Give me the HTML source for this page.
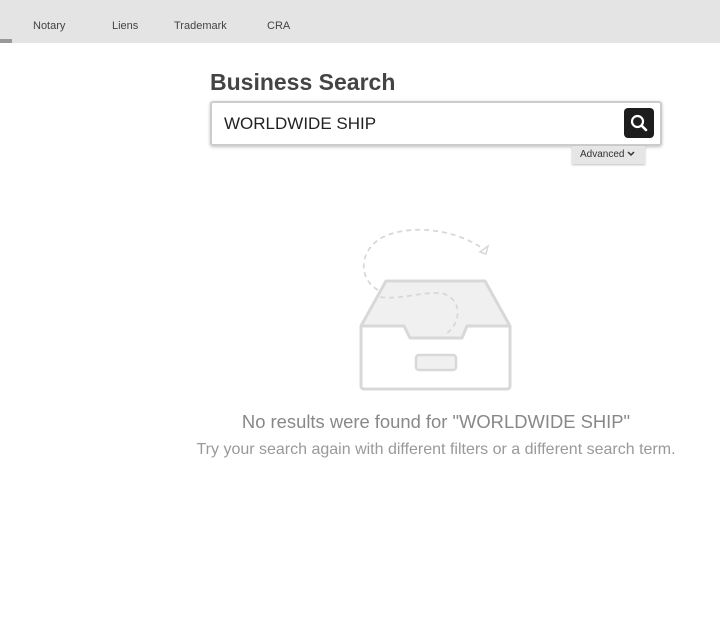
<!DOCTYPE html>
<html><head><style>
body{margin:0;width:720px;height:640px;background:#fff;font-family:"Liberation Sans",sans-serif;position:relative;overflow:hidden}
.hdr{position:absolute;left:0;top:0;width:720px;height:43px;background:#e4e4e4}
.tab{position:absolute;top:20px;font-size:11px;color:#444}
.ind{position:absolute;left:0;top:39px;width:12px;height:4px;background:#999}
h1{position:absolute;left:210px;top:69px;margin:0;font-size:23px;font-weight:bold;color:#444}
.box{position:absolute;left:210px;top:101px;width:448px;height:41px;border:2px solid #ccc;border-radius:3px;box-shadow:0 1px 3px rgba(0,0,0,.25)}
.box span{position:absolute;left:12px;top:11px;font-size:17px;color:#222}
.btn{position:absolute;left:412px;top:5px;width:30px;height:30px;background:#1d1d1d;border-radius:4px}
.adv{position:absolute;left:572px;top:146px;width:73px;height:18px;background:#e6e6e6;font-size:10px;color:#333;line-height:18px;text-indent:8px;box-shadow:0 1px 2px rgba(0,0,0,.25)}
.t1{position:absolute;left:0;width:872px;top:411px;text-align:center;font-size:18.4px;color:#888}
.t2{position:absolute;left:0;width:872px;top:441px;text-align:center;font-size:16px;color:#999}
</style></head><body>
<div class="hdr"></div><div class="ind"></div>
<div class="tab" style="left:33px">Notary</div>
<div class="tab" style="left:112px">Liens</div>
<div class="tab" style="left:174px">Trademark</div>
<div class="tab" style="left:267px">CRA</div>
<h1>Business Search</h1>
<div class="box"><span>WORLDWIDE SHIP</span><div class="btn"><svg width="30" height="30" viewBox="0 0 30 30"><circle cx="13.5" cy="13.5" r="5.5" fill="none" stroke="#fff" stroke-width="2.2"/><path d="M17.5 17.5L22 22" stroke="#fff" stroke-width="2.6" stroke-linecap="round"/></svg></div></div>
<div class="adv">Advanced <svg width="8" height="6" viewBox="0 0 8 6"><path d="M1 1l3 3 3-3" stroke="#333" stroke-width="1.5" fill="none"/></svg></div>
<svg style="position:absolute;left:0;top:0" width="720" height="640">
<path d="M386 281H485L510 326V386a3 3 0 0 1-3 3H364a3 3 0 0 1-3-3V326Z" fill="#f0f0f0" stroke="#d8d8d8" stroke-width="3" stroke-linejoin="round"/>
<path d="M361 326H404L410 338H462L467 326H510V386a3 3 0 0 1-3 3H364a3 3 0 0 1-3-3Z" fill="#fff" stroke="#d8d8d8" stroke-width="3" stroke-linejoin="round"/>
<rect x="416" y="355" width="40" height="15" rx="3" fill="#f0f0f0" stroke="#d8d8d8" stroke-width="2.5"/>
<path d="M378 290C360 280 358 255 378 240C400 225 450 225 485 250M380 297C400 300 420 292 440 293C460 296 465 320 445 335" fill="none" stroke="#d8d8d8" stroke-width="1.8" stroke-dasharray="5 4"/>
<path d="M480 252L488 246L486 254Z" fill="#fff" stroke="#d8d8d8" stroke-width="1.5"/>
</svg>
<div class="t1">No results were found for "WORLDWIDE SHIP"</div>
<div class="t2">Try your search again with different filters or a different search term.</div>
</body></html>
